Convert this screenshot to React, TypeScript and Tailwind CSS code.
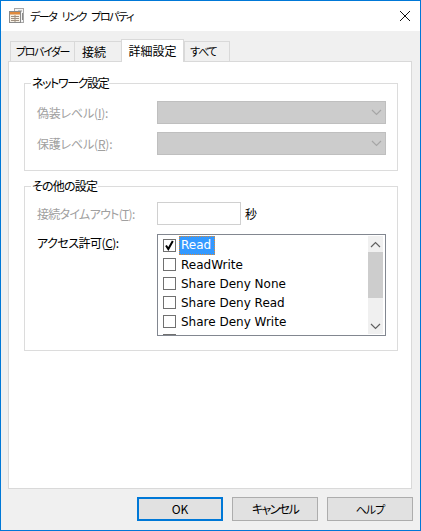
import React from "react";

function Chevron({ down, color, className }: { down: boolean; color: string; className?: string }) {
  return (
    <svg width="11" height="7" viewBox="0 0 11 7" className={className} fill="none" stroke={color} strokeWidth="1.2">
      <path d={down ? "M1 1 L5.5 5.5 L10 1" : "M1 6 L5.5 1.5 L10 6"} />
    </svg>
  );
}

function Combo() {
  return (
    <div className="w-[229px] h-[23px] bg-[#cccccc] border border-[#bfbfbf] flex items-center justify-end pr-[3px]">
      <Chevron down color="#a6a6a6" />
    </div>
  );
}

function Tab({ label, active, w }: { label: string; active?: boolean; w: string }) {
  return active ? (
    <div className={`${w} h-[23px] -mb-[1px] relative z-10 bg-white border border-b-0 border-[#d9d9d9] flex items-center justify-center whitespace-nowrap text-[12px] text-black`}>
      {label}
    </div>
  ) : (
    <div className={`${w} h-[20px] bg-[#f0f0f0] border border-b-0 border-[#d9d9d9] -mr-[1px] flex items-center whitespace-nowrap text-black`}>
      {label}
    </div>
  );
}

function Group({ title, className, titleClass, children }: { title: string; className: string; titleClass: string; children: React.ReactNode }) {
  return (
    <div className={`relative border border-[#dcdcdc] ${className}`}>
      <div className={`absolute left-[6px] -top-[9px] bg-white px-[1px] text-[12px] leading-[16px] text-black ${titleClass}`}>{title}</div>
      {children}
    </div>
  );
}

function Check({ on, label, selected }: { on?: boolean; label: string; selected?: boolean }) {
  return (
    <div className="h-[19px] flex items-start shrink-0 pl-[5px]">
      <div className="mt-[3px] w-[13px] h-[13px] shrink-0 border border-[#707070] bg-white flex items-center justify-center">
        {on && (
          <svg width="11" height="11" viewBox="0 0 11 11" fill="none" stroke="#000" strokeWidth="2">
            <path d="M2 5.5 L4.3 9 L8.8 1" />
          </svg>
        )}
      </div>
      <span
        className={`ml-[3px] h-[19px] text-[12px] [font-family:'DejaVu_Sans',sans-serif] ${
          selected
            ? "bg-[#3399ff] text-white border border-dotted border-[#d98a3a] leading-[16px] pl-[1px] pr-[3px]"
            : "text-black leading-[20px] px-[2px]"
        }`}
      >
        {label}
      </span>
    </div>
  );
}

function Label({ children, muted, className }: { children: React.ReactNode; muted?: boolean; className?: string }) {
  return (
    <div className={`w-[120px] shrink-0 whitespace-nowrap text-[12px] leading-[16px] ${muted ? "text-[#a0a0a0]" : "text-black"} ${className ?? ""}`}>
      {children}
    </div>
  );
}

function Button({ label, primary, className }: { label: string; primary?: boolean; className?: string }) {
  return (
    <div
      className={`w-[86px] h-[24px] bg-[#e1e1e1] flex items-center justify-center text-black ${
        primary ? "border-2 border-[#0078d7]" : "border border-[#adadad]"
      } ${className ?? "text-[12px]"}`}
    >
      {label}
    </div>
  );
}

export default function App() {
  return (
    <div className="w-[421px] h-[531px] border border-[#0078d7] bg-[#f0f0f0] flex flex-col overflow-hidden [font-family:'Noto_Sans_CJK_JP','Noto_Sans',sans-serif] [font-feature-settings:'palt']">
      <div className="h-[30px] shrink-0 bg-white flex items-center pl-[8px] pr-[9px]">
        <svg width="16" height="16" viewBox="0 0 16 16" className="shrink-0">
          <rect x="5.5" y="0.5" width="9" height="14" fill="#f4f4f4" stroke="#a8a8a8" />
          <rect x="9" y="2" width="4" height="2" fill="#c0c0c0" />
          <rect x="13" y="5" width="1" height="7" fill="#8a8a8a" />
          <rect x="0.5" y="3.5" width="11" height="11" fill="#f7f1e6" stroke="#8a8a8a" />
          <rect x="1" y="4" width="10" height="2.5" fill="#e08a3c" />
          <path d="M2 8.5 H10 M2 10.5 H10 M2 12.5 H10 M6 7 V14" stroke="#a09080" strokeWidth="1" />
        </svg>
        <span className="ml-[5px] text-[11px] text-black tracking-[-1.4px] [word-spacing:4px]">データ リンク プロパティ</span>
        <svg width="12" height="12" viewBox="0 0 12 12" className="ml-auto" fill="none" stroke="#111" strokeWidth="1">
          <path d="M1 1 L11 11 M11 1 L1 11" />
        </svg>
      </div>

      <div className="flex items-end pl-[9px] mt-[8px] h-[22px] shrink-0">
        <Tab label="プロバイダー" w="w-[65px] pl-[5px] text-[11px] tracking-[-1.4px]" />
        <Tab label="接続" w="w-[48px] pl-[7px] text-[12px]" />
        <Tab label="詳細設定" active w="w-[63px]" />
        <Tab label="すべて" w="w-[46px] pl-[5px] text-[11px] tracking-[-1.2px]" />
      </div>

      <div className="ml-[7px] mr-[8px] h-[428px] shrink-0 bg-white border border-[#d9d9d9] pt-[21px] pl-[15px] pr-[13px]">
        <Group title="ネットワーク設定" titleClass="tracking-[-1.4px]" className="h-[88px] pt-[17px] pl-[12px] flex flex-col gap-[8px]">
          <div className="flex items-center">
            <Label muted className="tracking-[-0.2px]">偽装レベル(<span className="underline">I</span>):</Label>
            <Combo />
          </div>
          <div className="flex items-center">
            <Label muted className="tracking-[-0.2px]">保護レベル(<span className="underline">R</span>):</Label>
            <Combo />
          </div>
        </Group>

        <Group title="その他の設定" titleClass="tracking-[-0.8px]" className="h-[165px] mt-[15px] pt-[15px] pl-[12px] flex flex-col gap-[9px]">
          <div className="flex items-center">
            <Label muted className="tracking-[-0.7px]">接続タイムアウト(<span className="underline">T</span>):</Label>
            <div className="w-[84px] h-[23px] bg-white border border-[#d0d0d0]" />
            <span className="ml-[4px] text-[12px] text-black">秒</span>
          </div>
          <div className="flex items-start">
            <Label className="pt-[1px] tracking-[-0.5px]">アクセス許可(<span className="underline">C</span>):</Label>
            <div className="w-[229px] h-[102px] border border-[#828790] bg-white flex overflow-hidden">
              <div className="flex-1 flex flex-col overflow-hidden pt-[1px]">
                <Check on selected label="Read" />
                <Check label="ReadWrite" />
                <Check label="Share Deny None" />
                <Check label="Share Deny Read" />
                <Check label="Share Deny Write" />
                <Check label="" />
              </div>
              <div className="w-[15px] shrink-0 my-[1px] mr-[2px] bg-[#f0f0f0] flex flex-col items-center">
                <div className="h-[16px] shrink-0 flex items-center justify-center">
                  <Chevron down={false} color="#606060" />
                </div>
                <div className="w-full h-[46px] bg-[#cdcdcd]" />
                <div className="mt-auto h-[16px] flex items-center justify-center">
                  <Chevron down color="#606060" />
                </div>
              </div>
            </div>
          </div>
        </Group>
      </div>

      <div className="flex justify-end gap-[9px] mt-[8px] pr-[7px]">
        <Button label="OK" primary />
        <Button label="キャンセル" className="text-[12px] tracking-[-1.6px]" />
        <Button label="ヘルプ" className="text-[11px] tracking-[-1px]" />
      </div>
    </div>
  );
}
